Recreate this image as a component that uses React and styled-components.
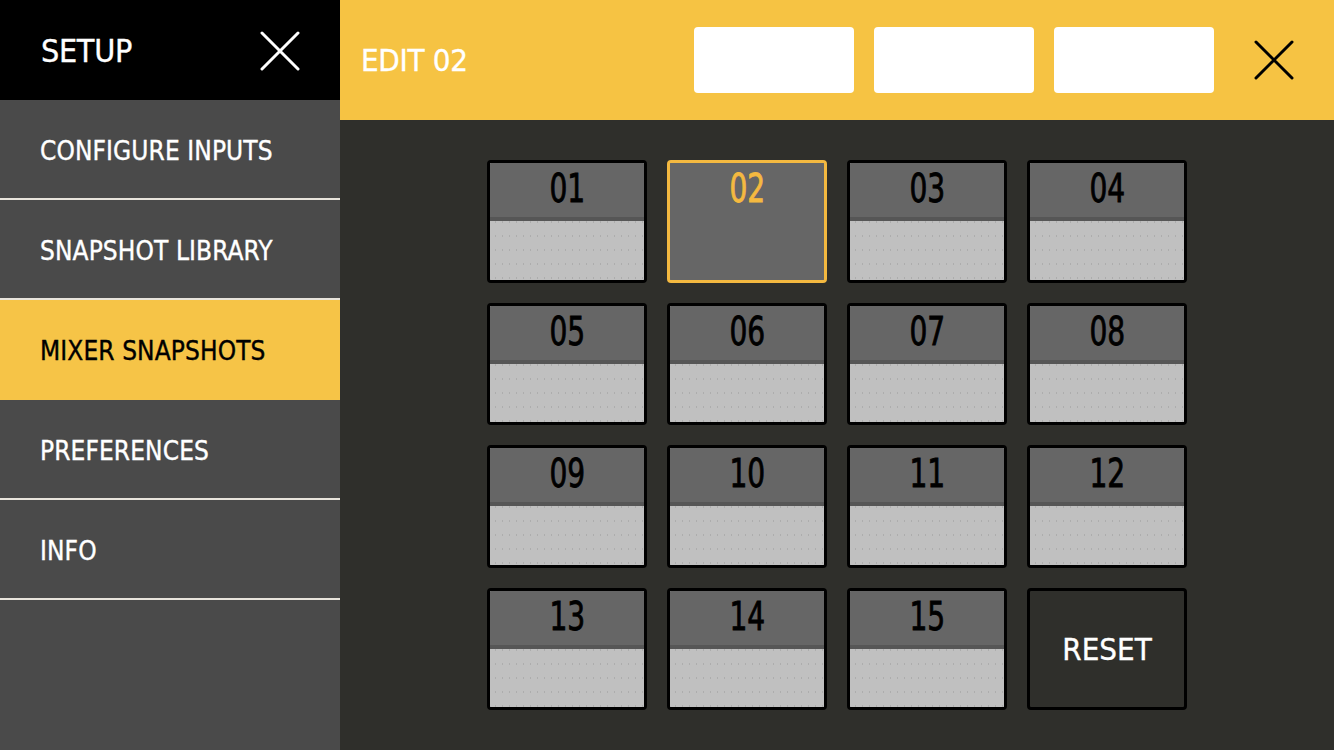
import styled, { createGlobalStyle } from "styled-components";

const GlobalStyle = createGlobalStyle`
    html, body {
        margin: 0;
        padding: 0;
        background: #2f2f2b;
    }
    * {
        box-sizing: border-box;
    }
`

const FONT = `"DejaVu Sans Condensed", "Liberation Sans Narrow", "Liberation Sans", sans-serif`

const Screen = styled.div`
    display: flex;
    width: 1334px;
    height: 750px;
    overflow: hidden;
    font-family: ${FONT};
    -webkit-text-stroke: 0.35px currentColor;
`

const Sidebar = styled.aside`
    display: flex;
    flex-direction: column;
    width: 340px;
    height: 100%;
    background: #4a4a4a;
`

const SideHeader = styled.div`
    display: flex;
    align-items: center;
    justify-content: space-between;
    height: 100px;
    padding: 2px 40px 0 41px;
    background: #000;
    color: #fff;
`

const SideTitle = styled.h1`
    margin: 0;
    font-size: 32px;
    font-weight: 400;
    letter-spacing: -0.3px;
`

const MenuItem = styled.div`
    display: flex;
    align-items: center;
    height: 100px;
    padding: 3px 0 0 40px;
    font-size: 26px;
    letter-spacing: 0.1px;
    color: ${({ active }) => (active ? '#000' : '#fff')};
    background: ${({ active }) => (active ? '#f6c447' : '#4a4a4a')};
    border-bottom: 2px solid ${({ active }) => (active ? '#f6c447' : '#e8e4dc')};
`

const Main = styled.main`
    display: flex;
    flex-direction: column;
    flex: 1;
    background: #2f2f2b;
`

const TopBar = styled.header`
    display: flex;
    align-items: center;
    height: 120px;
    padding: 0 40px 0 21px;
    background: #f6c343;
`

const EditTitle = styled.h2`
    flex: 1;
    margin: 0;
    font-size: 31px;
    font-weight: 400;
    letter-spacing: -0.3px;
    color: #fff;
`

const Field = styled.div`
    width: 160px;
    height: 66px;
    margin-left: 20px;
    background: #fff;
    border-radius: 4px;
`

const CloseButton = styled.button`
    display: flex;
    align-items: center;
    justify-content: center;
    width: 40px;
    height: 40px;
    padding: 0;
    margin-left: ${({ gap }) => gap || 0}px;
    border: none;
    background: transparent;
    cursor: pointer;
`

const Grid = styled.div`
    display: grid;
    grid-template-columns: repeat(4, 160px);
    grid-auto-rows: 122.5px;
    gap: 20px;
    justify-content: center;
    padding-top: 40px;
`

const Tile = styled.div`
    display: flex;
    flex-direction: column;
    border: 3px solid ${({ selected }) => (selected ? '#f4b940' : '#000')};
    border-radius: 4px;
    overflow: hidden;
    background: ${({ selected }) => (selected ? '#666' : '#c0c0c0')};
`

const TileTop = styled.div`
    display: flex;
    justify-content: center;
    height: 58px;
    padding-top: 6px;
    background: #666;
    border-bottom: 4px solid ${({ selected }) => (selected ? '#666' : '#565656')};
    color: ${({ selected }) => (selected ? '#f4b940' : '#000')};
`

const Number = styled.span`
    display: inline-block;
    font-size: 39px;
    line-height: 1;
    -webkit-text-stroke: 0.8px currentColor;
    transform: scaleX(0.8);
`

const TileBody = styled.div`
    flex: 1;
    background-color: ${({ selected }) => (selected ? '#666' : '#c0c0c0')};
    background-image: ${({ selected }) => selected ? 'none' :
        'radial-gradient(circle, #adadad 0.5px, transparent 0.8px)'};
    background-size: 7px 14px;
    background-position: 2px 8px;
`

const ResetTile = styled.button`
    display: flex;
    align-items: center;
    justify-content: center;
    padding-top: 2px;
    border: 3px solid #000;
    border-radius: 4px;
    background: #2f2f2b;
    color: #fff;
    font-family: ${FONT};
    font-size: 31px;
    -webkit-text-stroke: 0.35px currentColor;
    cursor: pointer;
`

const Cross = ({ color, size = 40, stroke = 3 }) => (
    <svg width={size} height={size} viewBox="0 0 40 40">
        <path d="M2 2 L38 38 M38 2 L2 38" stroke={color} strokeWidth={stroke} strokeLinecap="round" fill="none" />
    </svg>
)

const menu = ['CONFIGURE INPUTS', 'SNAPSHOT LIBRARY', 'MIXER SNAPSHOTS', 'PREFERENCES', 'INFO']
const slots = Array.from({ length: 15 }, (_, i) => String(i + 1).padStart(2, '0'))

export default function App() {
    const activeMenu = 'MIXER SNAPSHOTS'
    const selected = '02'

    return (
        <Screen>
            <GlobalStyle />
            <Sidebar>
                <SideHeader>
                    <SideTitle>SETUP</SideTitle>
                    <CloseButton type="button">
                        <Cross color="#fff" />
                    </CloseButton>
                </SideHeader>
                {menu.map(item => (
                    <MenuItem key={item} active={item === activeMenu}>{item}</MenuItem>
                ))}
            </Sidebar>
            <Main>
                <TopBar>
                    <EditTitle>EDIT {selected}</EditTitle>
                    <Field />
                    <Field />
                    <Field />
                    <CloseButton type="button" gap={40}>
                        <Cross color="#000" />
                    </CloseButton>
                </TopBar>
                <Grid>
                    {slots.map(num => {
                        const isSel = num === selected
                        return (
                            <Tile key={num} selected={isSel}>
                                <TileTop selected={isSel}>
                                    <Number>{num}</Number>
                                </TileTop>
                                <TileBody selected={isSel} />
                            </Tile>
                        )
                    })}
                    <ResetTile type="button">RESET</ResetTile>
                </Grid>
            </Main>
        </Screen>
    )
}
